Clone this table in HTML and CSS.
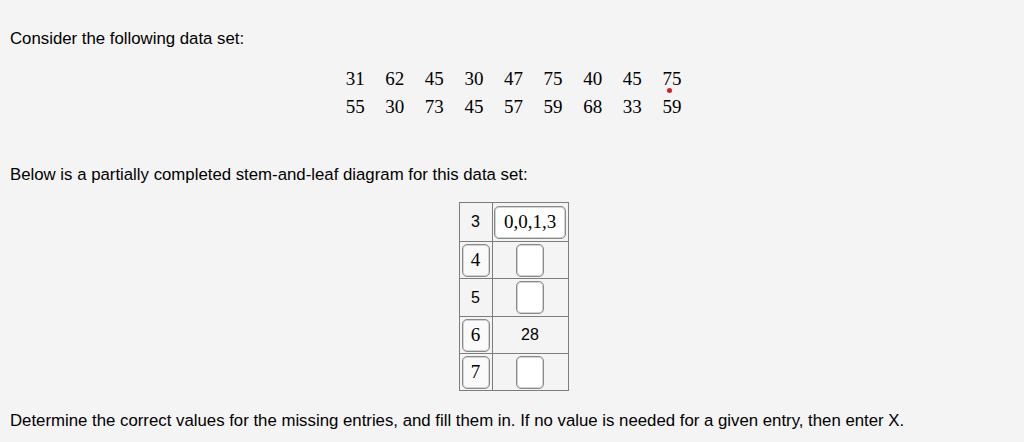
FILE: index.html
```html
<!DOCTYPE html>
<html>
<head>
<meta charset="utf-8">
<link rel="stylesheet" href="styles.css">
</head>
<body>
<p class="text">Consider the following data set:</p>
<div class="data">
  <span>31</span><span>62</span><span>45</span><span>30</span><span>47</span><span>75</span><span>40</span><span>45</span><span class="marked">75<i class="dot"></i></span>
  <span>55</span><span>30</span><span>73</span><span>45</span><span>57</span><span>59</span><span>68</span><span>33</span><span>59</span>
</div>
<p class="text below">Below is a partially completed stem-and-leaf diagram for this data set:</p>
<div class="diagram">
  <table class="stemleaf">
    <tr class="r1">
      <td class="stem">3</td>
      <td class="leaf"><span class="box wide">0,0,1,3</span></td>
    </tr>
    <tr class="r2">
      <td class="stem"><span class="box small">4</span></td>
      <td class="leaf"><span class="box empty"></span></td>
    </tr>
    <tr class="r3">
      <td class="stem">5</td>
      <td class="leaf"><span class="box empty"></span></td>
    </tr>
    <tr class="r4">
      <td class="stem"><span class="box small">6</span></td>
      <td class="leaf">28</td>
    </tr>
    <tr class="r5">
      <td class="stem"><span class="box small">7</span></td>
      <td class="leaf"><span class="box empty"></span></td>
    </tr>
  </table>
</div>
<p class="text determine">Determine the correct values for the missing entries, and fill them in. If no value is needed for a given entry, then enter X.</p>
</body>
</html>
```

FILE: styles.css
```css
html, body {
  background: #f4f4f4;
}
body {
  margin: 0;
  padding: 29px 7px 0 10px;
  font-family: "Liberation Sans", Arial, sans-serif;
  font-size: 16.8px;
  color: #000;
}
.text {
  margin: 0;
  line-height: 20px;
}
.data {
  margin: 16px auto 0;
  width: max-content;
  display: grid;
  grid-template-columns: repeat(9, 19px);
  column-gap: 20.6px;
  font-family: "Liberation Serif", "Times New Roman", serif;
  font-size: 19px;
  line-height: 28px;
  text-align: center;
}
.data span {
  white-space: nowrap;
}
.marked {
  position: relative;
}
.dot {
  position: absolute;
  left: 5px;
  top: 23px;
  width: 5px;
  height: 5px;
  border-radius: 50%;
  background: #e3171c;
}
.below {
  margin-top: 44px;
}
.diagram {
  margin-top: 17px;
  display: flex;
  justify-content: center;
}
.stemleaf {
  border-collapse: collapse;
}
.stemleaf td {
  border: 1px solid #7d7d7d;
  padding: 0;
  text-align: center;
  vertical-align: middle;
  font-size: 16px;
  height: 36px;
}
.stemleaf tr.r1 td { height: 38px; }
.stemleaf tr.r3 td { height: 37px; }
.stem {
  width: 32px;
}
.leaf {
  width: 75px;
}
.box {
  display: inline-flex;
  align-items: center;
  justify-content: center;
  box-sizing: border-box;
  height: 33px;
  border: 1px solid #8a8a8a;
  box-shadow: inset 0 0 0 1px #d2d2d2;
  border-radius: 5px;
  background: #fff;
  font-family: "Liberation Serif", "Times New Roman", serif;
  font-size: 19px;
  vertical-align: middle;
}
.box.wide {
  width: 72px;
}
.box.small {
  width: 28px;
  background: #fafafa;
}
.box.empty {
  width: 28px;
}
.determine {
  margin-top: 20px;
}
```
